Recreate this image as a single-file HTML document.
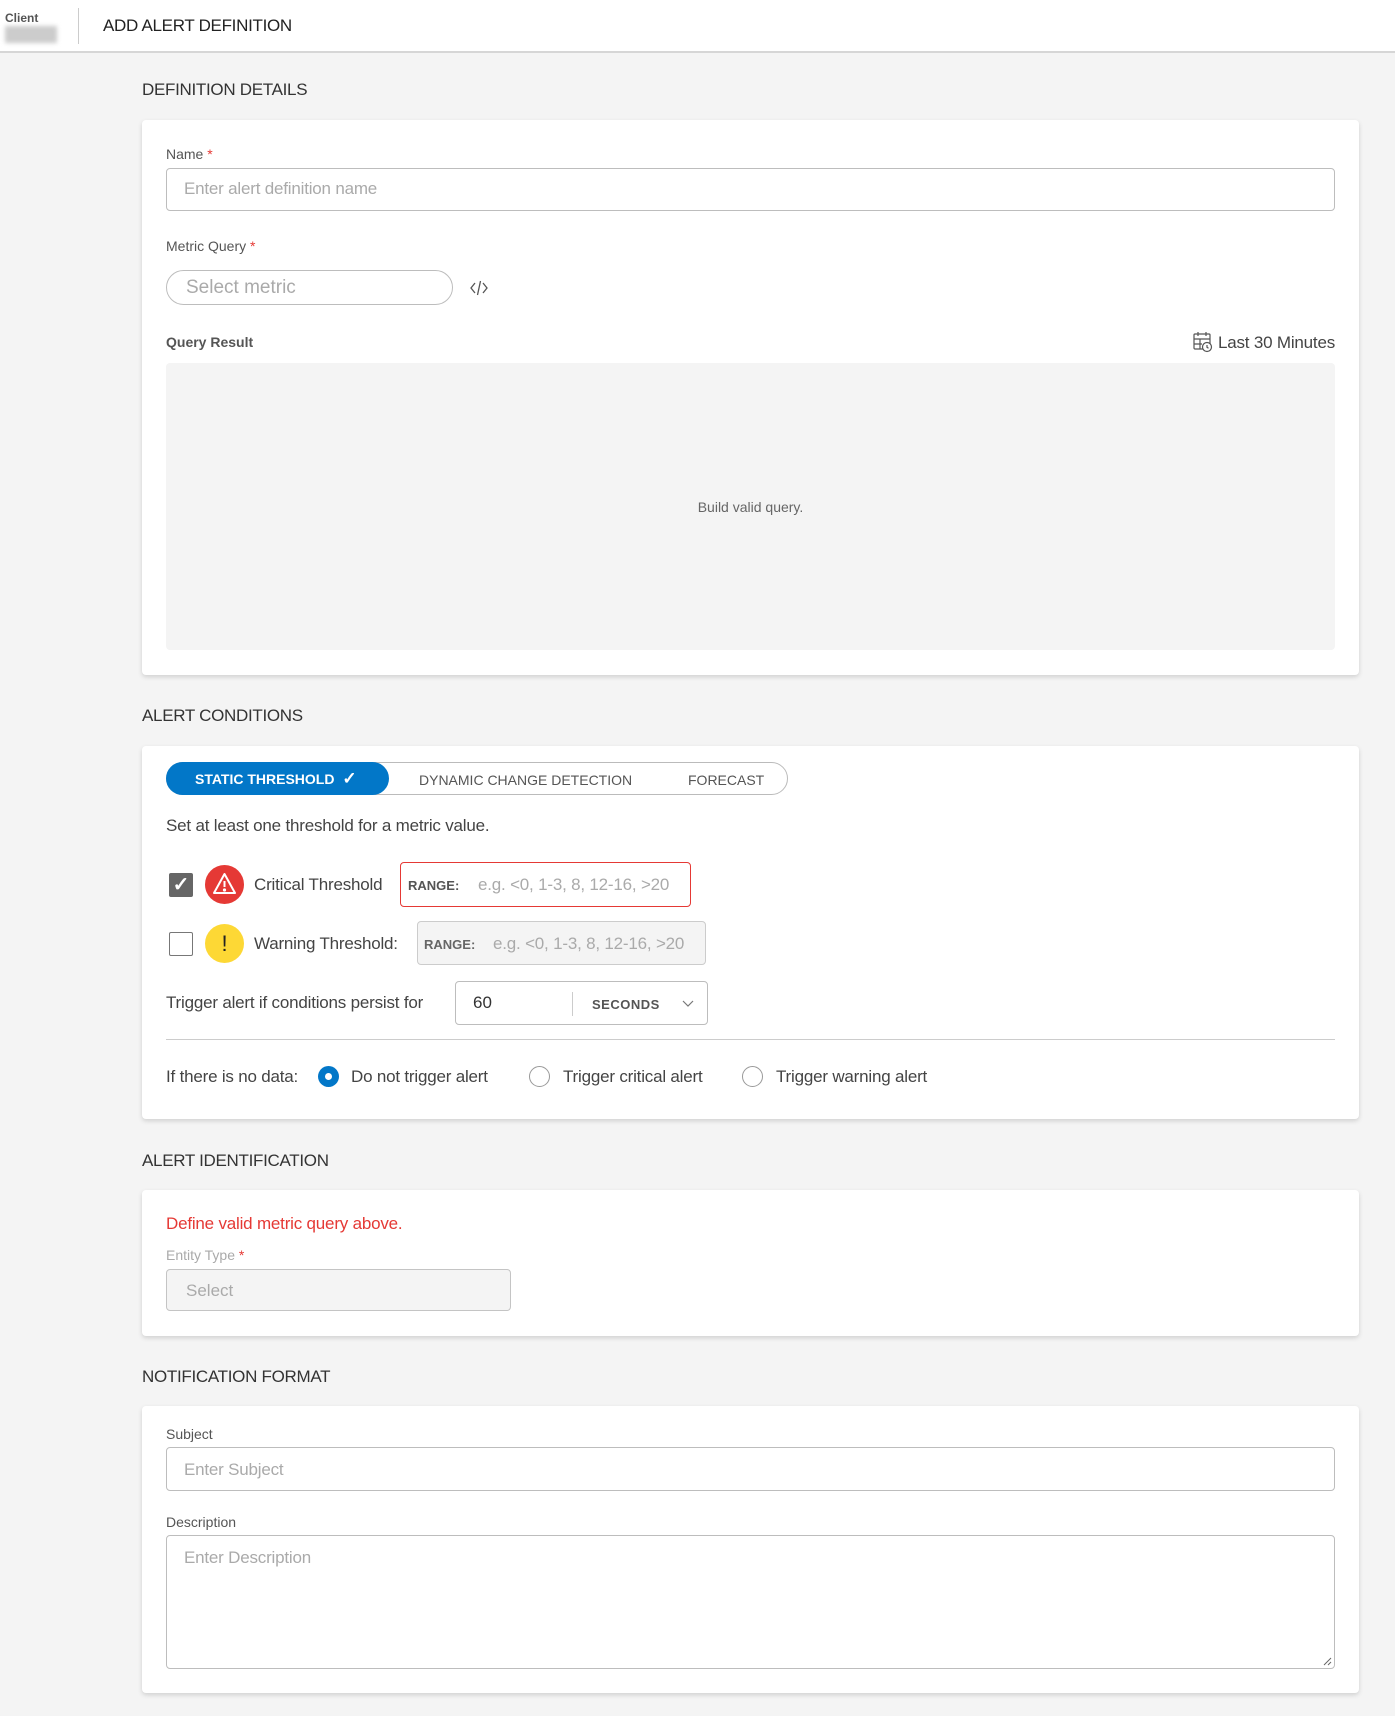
<!DOCTYPE html>
<html><head><meta charset="utf-8">
<style>
*{box-sizing:border-box;margin:0;padding:0}
body{width:1395px;height:1716px;background:#f4f4f4;font-family:"Liberation Sans",sans-serif;color:#333;position:relative;overflow:hidden}
.a{position:absolute;white-space:nowrap}
.hdr{position:absolute;left:0;top:0;width:1395px;height:53px;background:#fff;border-bottom:2px solid #d6d6d6}
.sec{position:absolute;left:142px;font-size:17px;color:#333;letter-spacing:-0.3px}
.card{position:absolute;left:142px;width:1217px;background:#fff;border-radius:4px;box-shadow:0 2px 5px rgba(0,0,0,.15)}
.lbl{font-size:14px;color:#555}
.req{color:#e53935}
.inp{position:absolute;border:1px solid #bdbdbd;border-radius:4px;background:#fff}
.ph{color:#aaa;font-size:17px;letter-spacing:-0.2px}
.t{letter-spacing:-0.2px}
</style></head><body>
<div class="hdr">
 <div class="a" style="left:5px;top:11px;font-size:12px;font-weight:bold;color:#555">Client</div>
 <div class="a" style="left:5px;top:26px;width:52px;height:17px;background:#ccc;filter:blur(2px)"></div>
 <div class="a" style="left:78px;top:8px;width:1px;height:36px;background:#ccc"></div>
 <div class="a" style="left:103px;top:16px;font-size:17px;color:#222;letter-spacing:-0.3px">ADD ALERT DEFINITION</div>
</div>

<div class="sec a" style="top:80px">DEFINITION DETAILS</div>
<div class="card" style="top:120px;height:555px"></div>
<div class="a lbl" style="left:166px;top:146px">Name <span class="req">*</span></div>
<div class="inp" style="left:166px;top:168px;width:1169px;height:43px"></div>
<div class="a ph" style="left:184px;top:179px">Enter alert definition name</div>
<div class="a lbl" style="left:166px;top:238px">Metric Query <span class="req">*</span></div>
<div class="inp" style="left:166px;top:270px;width:287px;height:35px;border-radius:18px"></div>
<div class="a" style="left:186px;top:277px;font-size:19px;color:#aaa">Select metric</div>
<svg class="a" style="left:469px;top:278px" width="20" height="20" viewBox="0 0 20 20" fill="none" stroke="#555" stroke-width="1.3"><path d="M6 5 L2 10 L6 15 M14 5 L18 10 L14 15 M11.5 3 L8.5 17"/></svg>
<div class="a" style="left:166px;top:334px;font-size:14px;font-weight:bold;color:#555">Query Result</div>
<svg class="a" style="left:1192px;top:331px" width="22" height="22" viewBox="0 0 22 22" fill="none" stroke="#555" stroke-width="1.2"><rect x="2" y="3" width="16" height="15" rx="1"/><path d="M2 8h16M6 1v4M14 1v4M2 13h8M8 8v10"/><circle cx="15" cy="16" r="4.5" fill="#fff"/><path d="M15 14v2.3l1.5 1"/></svg>
<div class="a t" style="left:1218px;top:333px;font-size:17px;color:#444">Last 30 Minutes</div>
<div class="a" style="left:166px;top:363px;width:1169px;height:287px;background:#f4f4f4;border-radius:4px"></div>
<div class="a" style="left:166px;top:499px;width:1169px;text-align:center;font-size:14px;color:#666">Build valid query.</div>

<div class="sec a" style="top:706px">ALERT CONDITIONS</div>
<div class="card" style="top:746px;height:373px"></div>
<div class="a" style="left:166px;top:762px;width:622px;height:33px;border:1px solid #bbb;border-radius:17px"></div>
<div class="a" style="left:166px;top:762px;width:223px;height:33px;background:#0277c8;border-radius:17px;color:#fff;font-size:14px;font-weight:bold;line-height:34px;padding-left:29px">STATIC THRESHOLD <span style="font-size:17px;margin-left:4px">✓</span></div>
<div class="a" style="left:419px;top:772px;font-size:14px;color:#555">DYNAMIC CHANGE DETECTION</div>
<div class="a" style="left:688px;top:772px;font-size:14px;color:#555">FORECAST</div>
<div class="a t" style="left:166px;top:816px;font-size:17px;color:#444">Set at least one threshold for a metric value.</div>

<div class="a" style="left:169px;top:873px;width:24px;height:24px;background:#666;border-radius:2px;color:#fff;font-size:20px;font-weight:bold;line-height:24px;text-align:center">✓</div>
<div class="a" style="left:205px;top:865px;width:39px;height:39px;border-radius:50%;background:#e53935"></div>
<svg class="a" style="left:211px;top:871px" width="27" height="27" viewBox="0 0 27 27" fill="none" stroke="#fff" stroke-width="2"><path d="M13.5 3 L24 22 H3 Z" stroke-linejoin="round"/><path d="M13.5 10v6"/><circle cx="13.5" cy="19" r=".6" fill="#fff"/></svg>
<div class="a t" style="left:254px;top:875px;font-size:17px;color:#444">Critical Threshold</div>
<div class="a" style="left:400px;top:862px;width:291px;height:45px;border:1px solid #e53935;border-radius:4px"></div>
<div class="a" style="left:408px;top:878px;font-size:13px;font-weight:bold;color:#555">RANGE:</div>
<div class="a ph" style="left:478px;top:875px">e.g. &lt;0, 1-3, 8, 12-16, &gt;20</div>

<div class="a" style="left:169px;top:932px;width:24px;height:24px;border:1px solid #777;border-radius:2px"></div>
<div class="a" style="left:205px;top:924px;width:39px;height:39px;border-radius:50%;background:#fdd835;text-align:center;line-height:39px;font-size:22px;color:#222">!</div>
<div class="a t" style="left:254px;top:934px;font-size:17px;color:#444">Warning Threshold:</div>
<div class="a" style="left:417px;top:921px;width:289px;height:44px;border:1px solid #ccc;border-radius:4px;background:#f4f4f4"></div>
<div class="a" style="left:424px;top:937px;font-size:13px;font-weight:bold;color:#666">RANGE:</div>
<div class="a ph" style="left:493px;top:934px">e.g. &lt;0, 1-3, 8, 12-16, &gt;20</div>

<div class="a t" style="left:166px;top:993px;font-size:17px;color:#444">Trigger alert if conditions persist for</div>
<div class="inp" style="left:455px;top:981px;width:253px;height:44px"></div>
<div class="a" style="left:473px;top:993px;font-size:17px;color:#333">60</div>
<div class="a" style="left:572px;top:992px;width:1px;height:24px;background:#ccc"></div>
<div class="a" style="left:592px;top:997px;font-size:13px;font-weight:bold;color:#555;letter-spacing:.5px">SECONDS</div>
<svg class="a" style="left:681px;top:998px" width="14" height="10" viewBox="0 0 14 10" fill="none" stroke="#777" stroke-width="1.2"><path d="M2 3l5 5 5-5"/></svg>
<div class="a" style="left:166px;top:1039px;width:1169px;height:1px;background:#ccc"></div>
<div class="a t" style="left:166px;top:1067px;font-size:17px;color:#444">If there is no data:</div>
<div class="a" style="left:318px;top:1066px;width:21px;height:21px;border-radius:50%;background:#0277c8"></div>
<div class="a" style="left:325px;top:1073px;width:7px;height:7px;border-radius:50%;background:#fff"></div>
<div class="a t" style="left:351px;top:1067px;font-size:17px;color:#444">Do not trigger alert</div>
<div class="a" style="left:529px;top:1066px;width:21px;height:21px;border-radius:50%;border:1px solid #999"></div>
<div class="a t" style="left:563px;top:1067px;font-size:17px;color:#444">Trigger critical alert</div>
<div class="a" style="left:742px;top:1066px;width:21px;height:21px;border-radius:50%;border:1px solid #999"></div>
<div class="a t" style="left:776px;top:1067px;font-size:17px;color:#444">Trigger warning alert</div>

<div class="sec a" style="top:1151px">ALERT IDENTIFICATION</div>
<div class="card" style="top:1190px;height:146px"></div>
<div class="a t" style="left:166px;top:1214px;font-size:17px;color:#e53935">Define valid metric query above.</div>
<div class="a" style="left:166px;top:1247px;font-size:14px;color:#aaa">Entity Type <span class="req">*</span></div>
<div class="a" style="left:166px;top:1269px;width:345px;height:42px;border:1px solid #c4c4c4;border-radius:4px;background:#f4f4f4"></div>
<div class="a" style="left:186px;top:1281px;font-size:17px;color:#aaa">Select</div>

<div class="sec a" style="top:1367px">NOTIFICATION FORMAT</div>
<div class="card" style="top:1406px;height:287px"></div>
<div class="a lbl" style="left:166px;top:1426px">Subject</div>
<div class="inp" style="left:166px;top:1447px;width:1169px;height:44px"></div>
<div class="a ph" style="left:184px;top:1460px">Enter Subject</div>
<div class="a lbl" style="left:166px;top:1514px">Description</div>
<div class="inp" style="left:166px;top:1535px;width:1169px;height:134px"></div>
<div class="a ph" style="left:184px;top:1548px">Enter Description</div>
<svg class="a" style="left:1322px;top:1656px" width="10" height="10" viewBox="0 0 10 10" stroke="#666" stroke-width="1"><path d="M9 2L2 9M9 6L6 9"/></svg>
</body></html>
